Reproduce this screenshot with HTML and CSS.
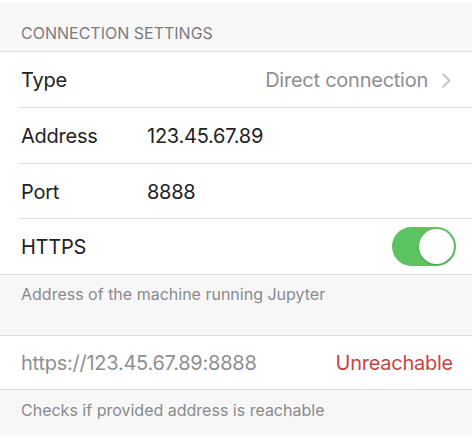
FILE: index.html
```html
<!DOCTYPE html>
<html lang="en">
<head>
<meta charset="utf-8">
<title>Connection Settings</title>
<link rel="stylesheet" href="styles.css">
</head>
<body>
<div class="page">
  <div class="section-header">CONNECTION SETTINGS</div>
  <div class="group">
    <div class="row">
      <span class="label">Type</span>
      <span class="detail">Direct connection</span>
      <svg class="chevron" width="9" height="15" viewBox="0 0 9 15"><path d="M1.2 1.2 L7.5 7.5 L1.2 13.8" fill="none" stroke="#c5c5c8" stroke-width="2" stroke-linecap="round" stroke-linejoin="round"/></svg>
    </div>
    <div class="row">
      <span class="label">Address</span>
      <span class="value">123.45.67.89</span>
    </div>
    <div class="row">
      <span class="label">Port</span>
      <span class="value">8888</span>
    </div>
    <div class="row">
      <span class="label">HTTPS</span>
      <span class="toggle"><span class="knob"></span></span>
    </div>
  </div>
  <div class="section-footer">Address of the machine running Jupyter</div>
  <div class="group">
    <div class="row url-row">
      <span class="url">https://123.45.67.89:8888</span>
      <span class="status">Unreachable</span>
    </div>
  </div>
  <div class="section-footer short">Checks if provided address is reachable</div>
</div>
</body>
</html>
```

FILE: styles.css
```css
* { box-sizing: border-box; }
html, body { margin: 0; padding: 0; background: #ffffff; }
body {
  font-family: "Inter", "Liberation Sans", sans-serif;
  -webkit-font-smoothing: antialiased;
}
.page {
  padding-top: 3px;
  padding-right: 2px;
}
.section-header {
  height: 48px;
  background: #f7f7f7;
  padding: 20px 0 0 21px;
  font-size: 16px;
  line-height: 20px;
  color: #7c7c80;
}
.group {
  background: #ffffff;
  border-top: 1px solid #dcdcdf;
  border-bottom: 1px solid #dcdcdf;
}
.row {
  display: flex;
  align-items: center;
  height: 56px;
  margin-left: 20px;
  padding: 1px 16px 0 1px;
  border-bottom: 1px solid #e0e0e3;
  font-size: 20px;
  letter-spacing: -0.25px;
  color: #222224;
}
.row:nth-child(3) { height: 55px; }
.row:last-child { border-bottom: none; height: 55px; }
.row.url-row { height: 53px; }
.label { width: 126px; flex: none; }
.value { flex: 1; }
.detail { margin-left: auto; color: #8e8e93; }
.chevron { margin-left: 14px; margin-right: 5px; flex: none; }
.toggle {
  margin-left: auto;
  margin-top: -1px;
  width: 64px;
  height: 39px;
  border-radius: 20px;
  background: #5bc35f;
  position: relative;
  flex: none;
}
.knob {
  position: absolute;
  top: 2px;
  right: 2px;
  width: 35px;
  height: 35px;
  border-radius: 50%;
  background: #ffffff;
  box-shadow: 0 1px 2px rgba(0,0,0,0.2);
}
.url { color: #8e8e93; }
.status { margin-left: auto; margin-right: 3px; color: #c8453f; }
.section-footer {
  height: 60px;
  background: #f7f7f7;
  padding: 9px 0 0 21px;
  font-size: 16px;
  line-height: 20px;
  color: #8a8a8e;
}
.section-footer.short { height: 45px; padding-top: 10px; }
```
